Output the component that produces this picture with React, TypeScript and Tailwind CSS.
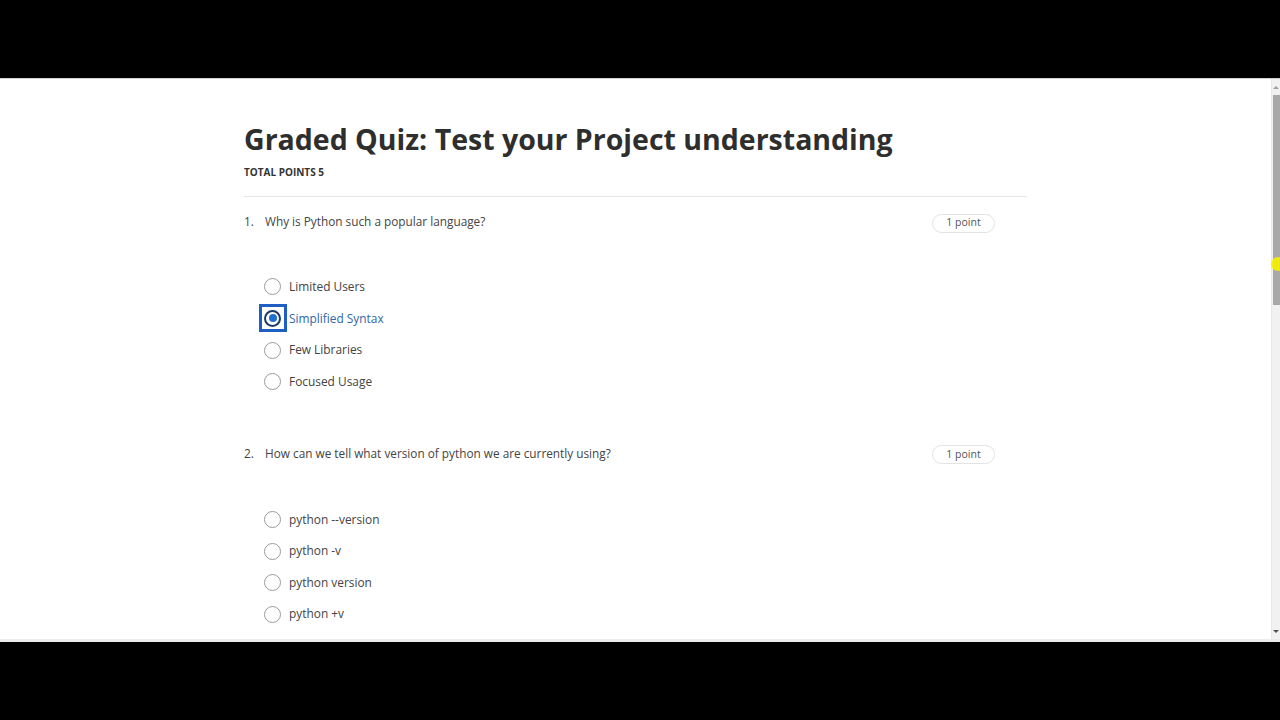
const font = { fontFamily: '"Open Sans", "Noto Sans", sans-serif' };

type Question = {
  num: number;
  text: string;
  options: string[];
  selected?: number;
};

const questions: Question[] = [
  {
    num: 1,
    text: "Why is Python such a popular language?",
    options: ["Limited Users", "Simplified Syntax", "Few Libraries", "Focused Usage"],
    selected: 1,
  },
  {
    num: 2,
    text: "How can we tell what version of python we are currently using?",
    options: ["python --version", "python -v", "python version", "python +v"],
  },
];

function Radio({ checked }: { checked: boolean }) {
  if (checked) {
    return (
      <div className="w-[28px] h-[28px] -ml-[6px] -mr-[6px] border-[3px] border-[#1f5fc4] flex items-center justify-center">
        <div className="w-[17px] h-[17px] rounded-full border-[2px] border-[#1b3a66] bg-white flex items-center justify-center">
          <div className="w-[8px] h-[8px] rounded-full bg-[#1f6fd1]" />
        </div>
      </div>
    );
  }
  return <div className="w-[17px] h-[17px] rounded-full border border-[#9a9a9a] bg-white" />;
}

function QuestionBlock({ q, top, gap }: { q: Question; top: string; gap: string }) {
  return (
    <div className={top}>
      <div className="flex items-center justify-between pr-8 h-5">
        <div className="flex text-[11.8px] text-[#444]">
          <span className="w-[21px]">{q.num}.</span>
          <span>{q.text}</span>
        </div>
        <div className="w-[63px] h-[19px] mt-[2px] rounded-full border border-[#e3e3e3] flex items-center justify-center text-[10.5px] text-[#555]">
          1 point
        </div>
      </div>
      <div className={gap + " pl-[20px]"}>
        {q.options.map((o, i) => (
          <div key={o} className="h-[31.67px] flex items-center">
            <div className="w-[17px] flex items-center justify-center">
              <Radio checked={q.selected === i} />
            </div>
            <span
              className={
                "ml-[8px] text-[11.9px] " +
                (q.selected === i ? "text-[#2f67a6]" : "text-[#444]")
              }
            >
              {o}
            </span>
          </div>
        ))}
      </div>
    </div>
  );
}

export default function App() {
  return (
    <div className="w-[1280px] h-[720px] bg-black overflow-hidden" style={font}>
      <div className="h-[78px] bg-black" />
      <div className="h-[564px] flex flex-col border-t border-[#d2d2d2] bg-white relative">
        <div className="flex-1 flex">
          <div className="flex-1 pl-[244px] pt-[40px]">
            <div className="w-[783px]">
              <h1 className="text-[28.5px] leading-[40px] font-bold text-[#2e2e2e]">
                Graded Quiz: Test your Project understanding
              </h1>
              <div className="mt-[5px] text-[10px] leading-4 font-bold text-[#333] uppercase">
                Total points 5
              </div>
              <div className="mt-4 border-t border-[#e6e6e6]" />
              <QuestionBlock q={questions[0]} top="mt-[15px]" gap="mt-[39px]" />
              <QuestionBlock q={questions[1]} top="mt-[46px]" gap="mt-[40px]" />
            </div>
          </div>
          <div className="w-[9px] bg-[#f1f1f1] flex flex-col items-center border-l border-[#e8e8e8]">
            <div className="h-[16px] flex items-center justify-center">
              <div className="w-0 h-0 border-l-[3px] border-r-[3px] border-b-[3px] border-l-transparent border-r-transparent border-b-[#a0a0a0]" />
            </div>
            <div className="w-[7px] h-[210px] bg-[#a8a8a8]" />
            <div className="flex-1" />
            <div className="h-[16px] flex items-center justify-center">
              <div className="w-0 h-0 border-l-[3px] border-r-[3px] border-t-[3px] border-l-transparent border-r-transparent border-t-[#505050]" />
            </div>
          </div>
        </div>
        <div className="h-[3px] bg-[#ececec]" />
        <div className="absolute left-[1271px] top-[178px] w-[14px] h-[14px] rounded-full bg-[#f5f000] opacity-90" />
      </div>
      <div className="h-[78px] bg-black" />
    </div>
  );
}
